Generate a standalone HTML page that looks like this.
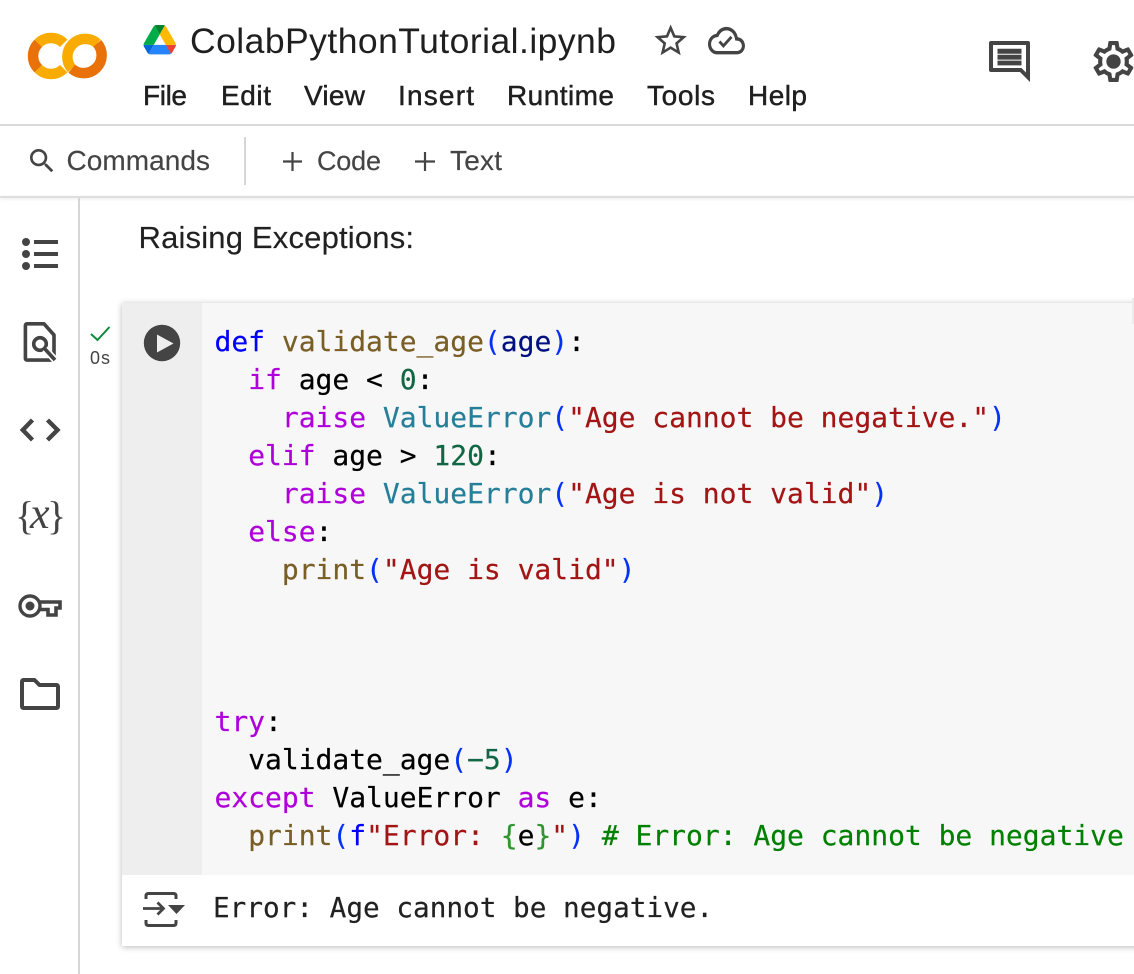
<!DOCTYPE html>
<html><head><meta charset="utf-8"><style>
html,body{margin:0;padding:0;background:#fff;width:1134px;height:974px;overflow:hidden}
#w{position:relative;width:1134px;height:974px;overflow:hidden}
.a{position:absolute}
svg{position:absolute;left:0;top:0}
pre{position:absolute;margin:0;font-family:"DejaVu Sans Mono",monospace;-webkit-text-stroke:.2px}
#code{left:214.5px;top:323px;font-size:28px;line-height:38px;color:#000;letter-spacing:-.02px}
.k{color:#af00db}.d{color:#0000ff}.f{color:#795e26}.p{color:#0431fa}.v{color:#001080}.n{color:#116644}.c{color:#267f99}.s{color:#a31515}.g{color:#008000}.b{color:#319331}
#out{left:213px;top:889px;font-size:27.7px;line-height:38px;color:#212121}
text{font-family:"Liberation Sans",sans-serif}
.m{font-size:28px;fill:#1f1f1f;stroke:#1f1f1f;stroke-width:.45px}
.t{font-size:28px;fill:#444;stroke:#444;stroke-width:.15px}
</style></head><body><div id="w">
<div class="a" style="left:0;top:124px;width:1134px;height:2px;background:#dadada"></div>
<div class="a" style="left:0;top:196px;width:1134px;height:2px;background:#dedede;box-shadow:0 1px 3px rgba(0,0,0,.1)"></div>
<div class="a" style="left:78px;top:198px;width:2px;height:776px;background:#d6d6d6"></div>
<div class="a" style="left:244px;top:137px;width:2px;height:48px;background:#d6d6d6"></div>
<div class="a" style="left:122px;top:303px;width:1020px;height:643px;background:#fff;box-shadow:0 1px 6px rgba(0,0,0,.28)"></div>
<div class="a" style="left:122px;top:303px;width:80px;height:572px;background:#eeeeee"></div>
<div class="a" style="left:202px;top:303px;width:932px;height:572px;background:#f7f7f7"></div>
<div class="a" style="left:1132px;top:298px;width:2px;height:26px;background:#ececec"></div>
<svg width="1134" height="974" viewBox="0 0 1134 974" fill="none">
<g fill="none" stroke-width="10.500">
<path d="M63.700 43.300A18 18 0 0 0 38.300 43.300" stroke="#F9AB00"/>
<path d="M38.300 68.700A18 18 0 0 0 63.700 68.700" stroke="#F9AB00"/>
<path d="M38.300 43.300A18 18 0 0 0 38.300 68.700" stroke="#E8710A"/>
<path d="M71.800 68.700A18 18 0 0 1 97.200 43.300" stroke="#F9AB00"/>
<path d="M97.200 43.300A18 18 0 0 1 71.800 68.700" stroke="#E8710A"/>
</g>
<g transform="translate(143.5 25) scale(.3723 .376)">
<path d="m6.6 66.85 3.85 6.65c.8 1.4 1.95 2.5 3.3 3.3l13.75-23.8h-27.5c0 1.55.4 3.1 1.2 4.5z" fill="#0066da"/>
<path d="m43.65 25-13.75-23.8c-1.35.8-2.5 1.9-3.3 3.3l-25.4 44a9.06 9.06 0 0 0 -1.2 4.5h27.5z" fill="#00ac47"/>
<path d="m73.55 76.8c1.35-.8 2.5-1.9 3.3-3.3l1.6-2.75 7.65-13.25c.8-1.4 1.2-2.95 1.2-4.5h-27.502l5.852 11.5z" fill="#ea4335"/>
<path d="m43.65 25 13.75-23.8c-1.35-.8-2.9-1.2-4.5-1.2h-18.5c-1.6 0-3.15.45-4.5 1.2z" fill="#00832d"/>
<path d="m59.8 53h-32.3l-13.75 23.8c1.35.8 2.9 1.2 4.5 1.2h50.8c1.6 0 3.15-.45 4.5-1.2z" fill="#2684fc"/>
<path d="m73.4 26.5-12.7-22c-.8-1.4-1.95-2.5-3.3-3.3l-13.75 23.8 16.15 28h27.45c0-1.55-.4-3.1-1.2-4.5z" fill="#ffba00"/>
</g>
<text x="190" y="53" font-size="35.5" fill="#1f1f1f" textLength="426" lengthAdjust="spacing">ColabPythonTutorial.ipynb</text>
<text class="m" x="143" y="105" textLength="44">File</text>
<text class="m" x="221" y="105" textLength="50">Edit</text>
<text class="m" x="304" y="105" textLength="61">View</text>
<text class="m" x="398" y="105" textLength="76">Insert</text>
<text class="m" x="507" y="105" textLength="107">Runtime</text>
<text class="m" x="647" y="105" textLength="68">Tools</text>
<text class="m" x="748" y="105" textLength="59">Help</text>
<text class="t" x="66.5" y="170" textLength="143.5">Commands</text>
<text class="t" x="317" y="170" style="font-size:27px" textLength="64">Code</text>
<text class="t" x="450" y="170" textLength="52">Text</text>
<text x="138.5" y="248" font-size="31" fill="#212121" stroke="#212121" stroke-width=".15" textLength="275.5">Raising Exceptions:</text>
<text x="90" y="364" font-size="18" fill="#444" textLength="20">0s</text>

<path transform="translate(651.2 21.2) scale(1.62)" fill="#444" d="M22 9.24l-7.19-.62L12 2 9.19 8.63 2 9.24l5.46 4.73L5.82 21 12 17.27 18.18 21l-1.63-7.03L22 9.24zM12 15.4l-3.76 2.27 1-4.28-3.32-2.88 4.38-.38L12 6.1l1.71 4.04 4.38.38-3.32 2.88 1 4.28L12 15.4z"/>
<g transform="translate(708 20) scale(1.54 1.72)" fill="#444"><path d="M19.35 10.04C18.67 6.59 15.64 4 12 4 9.11 4 6.6 5.64 5.35 8.04 2.34 8.36 0 10.91 0 14c0 3.31 2.69 6 6 6h13c2.76 0 5-2.24 5-5 0-2.64-2.05-4.78-4.65-4.96zM19 18H6c-2.21 0-4-1.79-4-4 0-2.05 1.53-3.76 3.56-3.97l1.07-.11.5-.95C8.08 7.14 9.94 6 12 6c2.62 0 4.88 1.86 5.39 4.43l.3 1.5 1.53.11c1.56.1 2.78 1.41 2.78 2.96 0 1.65-1.35 3-3 3z"/><path d="M10 16.3l-3.2-3.2 1.3-1.2 1.9 1.9 4.6-4.6 1.3 1.2z"/></g>
<path fill="#444" fill-rule="evenodd" d="M991 41H1028a2 2 0 0 1 2 2V82L1020 72H991a2 2 0 0 1-2-2V43a2 2 0 0 1 2-2ZM993 45V68H1021.5L1026 72.500V45Z"/>
<path fill="#444" d="M997.500 48.700H1021.500V53.800H997.500ZM997.500 54.800H1021.500V59.600H997.500ZM997.500 60.600H1021.500V65.400H997.500Z"/>
<g transform="translate(1088.9 36.9) scale(2.05)" fill="#444"><path d="M19.43 12.98c.04-.32.07-.64.07-.98 0-.34-.03-.66-.07-.98l2.11-1.65c.19-.15.24-.42.12-.64l-2-3.46c-.09-.16-.26-.25-.44-.25-.06 0-.12.01-.17.03l-2.49 1c-.52-.4-1.08-.73-1.69-.98l-.38-2.65C14.46 2.18 14.25 2 14 2h-4c-.25 0-.46.18-.49.42l-.38 2.65c-.61.25-1.17.59-1.69.98l-2.49-1c-.06-.02-.12-.03-.18-.03-.17 0-.34.09-.43.25l-2 3.46c-.13.22-.07.49.12.64l2.11 1.65c-.04.32-.07.65-.07.98 0 .33.03.66.07.98l-2.11 1.65c-.19.15-.24.42-.12.64l2 3.46c.09.16.26.25.44.25.06 0 .12-.01.17-.03l2.49-1c.52.4 1.08.73 1.69.98l.38 2.65c.03.24.24.42.49.42h4c.25 0 .46-.18.49-.42l.38-2.65c.61-.25 1.17-.59 1.69-.98l2.49 1c.06.02.12.03.18.03.17 0 .34-.09.43-.25l2-3.46c.12-.22.07-.49-.12-.64l-2.11-1.65zm-1.98-1.71c.04.31.05.52.05.73 0 .21-.02.43-.05.73l-.14 1.13.89.7 1.08.84-.7 1.21-1.27-.51-1.04-.42-.9.68c-.43.32-.84.56-1.25.73l-1.06.43-.16 1.13-.2 1.35h-1.4l-.19-1.35-.16-1.13-1.06-.43c-.43-.18-.83-.41-1.23-.71l-.91-.7-1.06.43-1.27.51-.7-1.21 1.08-.84.89-.7-.14-1.13c-.03-.31-.05-.54-.05-.74s.02-.43.05-.73l.14-1.13-.89-.7-1.08-.84.7-1.21 1.27.51 1.04.42.9-.68c.43-.32.84-.56 1.25-.73l1.06-.43.16-1.13.2-1.35h1.39l.19 1.35.16 1.13 1.06.43c.43.18.83.41 1.23.71l.91.7 1.06-.43 1.27-.51.7 1.21-1.07.85-.89.7.14 1.13z"/><circle cx="12" cy="12" r="3.5"/></g>
<path transform="translate(26 145) scale(1.33)" fill="#444" d="M15.5 14h-.79l-.28-.27C15.41 12.59 16 11.11 16 9.5 16 5.91 13.09 3 9.5 3S3 5.91 3 9.5 5.91 16 9.5 16c1.61 0 3.09-.59 4.23-1.57l.27.28v.79l5 4.99L20.49 19l-4.99-5zm-6 0C7.01 14 5 11.99 5 9.5S7.01 5 9.5 5 14 7.01 14 9.5 11.99 14 9.5 14z"/>
<path d="M283 161.500H302M292.500 152V171M415 161.500H435M425 152V171" stroke="#444" stroke-width="2.200"/>

<g fill="#444"><circle cx="26" cy="242" r="4"/><circle cx="26" cy="254" r="4"/><circle cx="26" cy="266" r="4"/><rect x="34" y="240" width="24" height="4"/><rect x="34" y="252" width="24" height="4"/><rect x="34" y="264" width="24" height="4"/></g>
<path d="M44 323.800H27a1.600 1.600 0 0 0-1.600 1.600V358.500a1.600 1.600 0 0 0 1.600 1.600H54V335Z" stroke="#444" stroke-width="3.600" stroke-linejoin="round"/>
<circle cx="40" cy="344" r="6.300" stroke="#444" stroke-width="3.600"/>
<path d="M45 349L56 361" stroke="#fff" stroke-width="7"/>
<path d="M44.500 348.500L55 360" stroke="#444" stroke-width="3.600"/>
<path d="M32.500 420L22.800 430L32.500 440M47.500 420L57.500 430L47.500 440" stroke="#444" stroke-width="4.400"/>
<g fill="#444">
<text x="15" y="529" font-size="40" style="font-family:'Liberation Serif',serif">{</text>
<text x="30" y="528" font-size="44" font-style="italic" style="font-family:'Liberation Serif',serif">x</text>
<text x="47" y="529" font-size="40" style="font-family:'Liberation Serif',serif">}</text>
</g>
<path d="M38 602H60V608H56V615H48V609.500H38" stroke="#444" stroke-width="3.600"/>
<circle cx="30" cy="606" r="10" stroke="#444" stroke-width="3.400" fill="#fff"/>
<circle cx="30" cy="606" r="4.500" fill="#444"/>
<path d="M22 681.500a1.500 1.500 0 0 1 1.500-1.500H34.500L39.500 685H56.500a1.500 1.500 0 0 1 1.500 1.500V706.500a1.500 1.500 0 0 1-1.500 1.500H23.500a1.500 1.500 0 0 1-1.500-1.500Z" stroke="#444" stroke-width="4" stroke-linejoin="round"/>

<path d="M91 334L97.500 340L109.500 327" stroke="#0a8a3a" stroke-width="2"/>
<circle cx="162" cy="343" r="18.200" fill="#444"/>
<path d="M157 334.500L173.500 343.500L157 352.500Z" fill="#eeeeee"/>
<path d="M146 899V896Q146 893.500 148.500 893.500H173.500Q176 893.500 176 896V899M146 920V923Q146 925.500 148.500 925.500H173.500Q176 925.500 176 923V920" stroke="#444" stroke-width="3"/>
<path d="M143 908.500H163M157.500 902.500L163.500 908.500L157.500 914.500" stroke="#444" stroke-width="2.800"/>
<path d="M168 905H185L176.500 914Z" fill="#444"/>
</svg>
<pre id="code"><span class="d">def</span> <span class="f">validate_age</span><span class="p">(</span><span class="v">age</span><span class="p">)</span>:
  <span class="k">if</span> age &lt; <span class="n">0</span>:
    <span class="k">raise</span> <span class="c">ValueError</span><span class="p">(</span><span class="s">"Age cannot be negative."</span><span class="p">)</span>
  <span class="k">elif</span> age &gt; <span class="n">120</span>:
    <span class="k">raise</span> <span class="c">ValueError</span><span class="p">(</span><span class="s">"Age is not valid"</span><span class="p">)</span>
  <span class="k">else</span>:
    <span class="f">print</span><span class="p">(</span><span class="s">"Age is valid"</span><span class="p">)</span>



<span class="k">try</span>:
  validate_age<span class="p">(</span><span class="n">−5</span><span class="p">)</span>
<span class="k">except</span> ValueError <span class="k">as</span> e:
  <span class="f">print</span><span class="p">(</span><span class="d">f</span><span class="s">"Error: </span><span class="b">{</span>e<span class="b">}</span><span class="s">"</span><span class="p">)</span> <span class="g"># Error: Age cannot be negative</span></pre>
<pre id="out">Error: Age cannot be negative.</pre>
</div></body></html>
